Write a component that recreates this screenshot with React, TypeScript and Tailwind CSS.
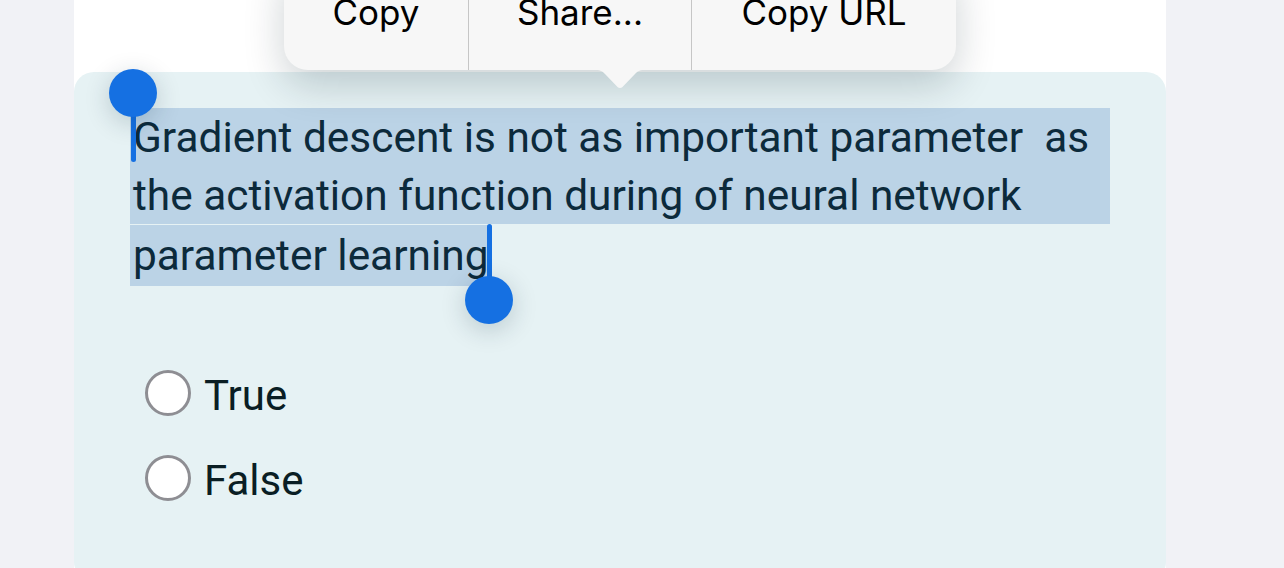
import React from "react";

function Handle({ className }: { className: string }) {
  return (
    <div
      className={
        "absolute w-[48px] h-[48px] rounded-full bg-[#1570e2] shadow-[0_6px_26px_rgba(0,40,60,0.2)] " +
        className
      }
    />
  );
}

export default function App() {
  const font = { fontFamily: "Roboto, 'Noto Sans', sans-serif" };
  return (
    <div className="w-full h-[568px] bg-[#f1f2f6] overflow-hidden relative" style={font}>
      <div className="ml-[74px] w-[1092px] h-full bg-white pt-[72px]">
        <div className="relative h-[510px] rounded-[20px] bg-[#e6f2f4] pl-[56px] pt-[36px]">
          <div className="text-[42.4px] text-[#0c2a3b]">
            <div className="w-[980px] h-[59px] leading-[59px] bg-[#bbd3e6] pl-[3px] whitespace-pre">
              Gradient descent is not as important parameter  as
            </div>
            <div className="w-[980px] h-[57px] leading-[57px] bg-[#bbd3e6] pl-[3px] whitespace-pre">
              the activation function during of neural network
            </div>
            <div className="inline-block h-[61px] leading-[61px] bg-[#bbd3e6] pl-[3px] pr-[3px] whitespace-pre">
              parameter learning
            </div>
          </div>

          <div className="mt-[82px] flex flex-col gap-[39px] pl-[15px] text-[42px] text-[#0a1e24]">
            <div className="flex items-center gap-[13px] h-[46px]">
              <div className="w-[46px] h-[46px] rounded-full border-[3px] border-[#8e8e93] bg-white" />
              <span className="leading-none pt-[6px]">True</span>
            </div>
            <div className="flex items-center gap-[13px] h-[46px]">
              <div className="w-[46px] h-[46px] rounded-full border-[3px] border-[#8e8e93] bg-white" />
              <span className="leading-none pt-[6px]">False</span>
            </div>
          </div>

          {/* selection handles */}
          <div className="absolute left-[57px] top-[20px] w-[5px] h-[70px] rounded-b-full bg-[#1570e2]" />
          <Handle className="left-[35px] top-[-3px]" />
          <div className="absolute left-[413px] top-[152px] w-[5px] h-[70px] rounded-t-full bg-[#1570e2]" />
          <Handle className="left-[391px] top-[204px]" />
        </div>
      </div>

      {/* context menu */}
      <div
        className="absolute left-[284px] top-[-40px] w-[672px] h-[110px] rounded-[24px] bg-[#f7f7f7] shadow-[0_14px_40px_rgba(0,30,40,0.2)] flex text-[35px] text-black"
        style={{ fontFamily: "Inter, 'Liberation Sans', sans-serif" }}
      >
        <div className="w-[184px] flex justify-center pt-[35px] leading-none">Copy</div>
        <div className="w-[223px] flex justify-center pt-[35px] leading-none border-l border-[#c6c6c6]">Share...</div>
        <div className="flex-1 flex justify-center pt-[35px] leading-none border-l border-[#c6c6c6]">Copy URL</div>
      </div>
      <svg className="absolute left-[596px] top-[69px]" width="48" height="20" viewBox="0 0 48 20">
        <path d="M0 1 C5 1 7 3 9 5 L21.5 18 C23 19.4 25 19.4 26.5 18 L39 5 C41 3 43 1 48 1 L48 0 L0 0 Z" fill="#f7f7f7" />
      </svg>
    </div>
  );
}
